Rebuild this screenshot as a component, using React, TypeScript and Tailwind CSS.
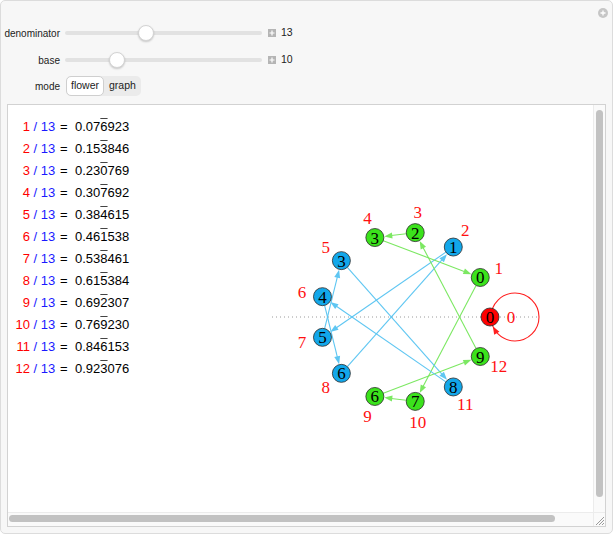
import React from "react";

const GREEN = new Set([1, 10, 9, 12, 3, 4]);
const CX = 405;
const CY = 317;
const R = 85;
const LR = 106;
const NR = 9;

const nodes = Array.from({ length: 13 }, (_, k) => {
  const t = (2 * Math.PI * k) / 13;
  return {
    k,
    x: CX + R * Math.cos(t),
    y: CY - R * Math.sin(t),
    lx: CX + LR * Math.cos(t),
    ly: CY - LR * Math.sin(t),
    d: Math.floor((10 * k) / 13),
  };
});

function fillFor(k: number) {
  if (k === 0) return "#ff0000";
  return GREEN.has(k) ? "#3be21c" : "#12a7ea";
}
function edgeFor(k: number) {
  return GREEN.has(k) ? "#7ce862" : "#5ec6f2";
}

function Edge({ a, b }: { a: number; b: number }) {
  const A = nodes[a];
  const B = nodes[b];
  const dx = B.x - A.x;
  const dy = B.y - A.y;
  const len = Math.hypot(dx, dy);
  const ux = dx / len;
  const uy = dy / len;
  const tipX = B.x - ux * (NR + 0.5);
  const tipY = B.y - uy * (NR + 0.5);
  const bx = tipX - ux * 8;
  const by = tipY - uy * 8;
  const nx = -uy;
  const ny = ux;
  const c = edgeFor(a);
  return (
    <g>
      <line x1={A.x + ux * NR} y1={A.y + uy * NR} x2={bx + ux * 1} y2={by + uy * 1} stroke={c} strokeWidth={1.1} />
      <polygon
        points={`${tipX},${tipY} ${bx + nx * 3},${by + ny * 3} ${bx - nx * 3},${by - ny * 3}`}
        fill={c}
      />
    </g>
  );
}

function Graph() {
  const tipX = 492.8;
  const tipY = 326.2;
  const ux = -0.5;
  const uy = -0.866;
  const bx = tipX - ux * 8;
  const by = tipY - uy * 8;
  const nx = -uy;
  const ny = ux;
  return (
    <svg width={300} height={250} className="mt-[85px] shrink-0" style={{ fontFamily: '"Liberation Serif", serif' }}>
      <g transform="translate(-260,-190)">
        <line x1={272} y1={317} x2={537} y2={317} stroke="#9a9a9a" strokeWidth={1} strokeDasharray="1 3" />
        <circle cx={515} cy={317} r={24} fill="none" stroke="#ff2020" strokeWidth={1.1} />
        <polygon
          points={`${tipX},${tipY} ${bx + nx * 3},${by + ny * 3} ${bx - nx * 3},${by - ny * 3}`}
          fill="#ff2020"
        />
        {nodes.slice(1).map((n) => (
          <Edge key={n.k} a={n.k} b={(10 * n.k) % 13} />
        ))}
        {nodes.map((n) => (
          <g key={n.k}>
            <circle cx={n.x} cy={n.y} r={NR} fill={fillFor(n.k)} stroke="#2a2a2a" strokeWidth={0.8} />
            <text x={n.x} y={n.y + 6} textAnchor="middle" fontSize={17} fill="#000">
              {n.d}
            </text>
            <text x={n.lx} y={n.ly + 6} textAnchor="middle" fontSize={17} fill="#ff1010">
              {n.k}
            </text>
          </g>
        ))}
      </g>
    </svg>
  );
}

const decimals = [
  "076923",
  "153846",
  "230769",
  "307692",
  "384615",
  "461538",
  "538461",
  "615384",
  "692307",
  "769230",
  "846153",
  "923076",
];

function Row({ n }: { n: number }) {
  const d = decimals[n - 1];
  return (
    <div className="flex h-[22px] items-center whitespace-pre text-[13px]">
      <span className="w-[22px] text-right text-[#ff0000]">{n}</span>
      <span className="text-[#1a1aff]"> / 13</span>
      <span className="ml-[1px] text-black"> =</span>
      <span className="ml-[7.5px] text-black">
        0.{d.slice(0, 2)}
        <span className="overline decoration-[#444]">{d[2]}</span>
        {d.slice(3)}
      </span>
    </div>
  );
}

function Slider({ label, value, pos }: { label: string; value: string; pos: number }) {
  return (
    <div className="flex items-center h-full">
      <div className="w-[59px] text-right text-[10px] text-[#222]">{label}</div>
      <div className="relative ml-[5px] w-[197px] h-[4px] rounded-full bg-[#e2e2e2]">
        <div
          className="absolute top-1/2 w-[16px] h-[16px] -translate-x-1/2 -translate-y-1/2 rounded-full bg-white border border-[#d4d4d4] shadow-[0_1px_2px_rgba(0,0,0,0.2)]"
          style={{ left: pos }}
        />
      </div>
      <div className="ml-[6px] w-[8px] h-[8px] bg-[#b5b5b5] flex items-center justify-center">
        <svg width={8} height={8} viewBox="0 0 8 8">
          <path d="M4 1.5v5M1.5 4h5" stroke="#fff" strokeWidth={1.2} />
        </svg>
      </div>
      <div className="ml-[5px] text-[10.5px] text-[#222]">{value}</div>
    </div>
  );
}

export default function App() {
  return (
    <div className="w-[614px] h-[535px] bg-white" style={{ fontFamily: '"Liberation Sans", Arial, sans-serif' }}>
      <div className="relative w-[613px] h-[534px] border border-[#dcdcdc] rounded-[5px] bg-[#f7f7f7] flex flex-col">
        <div className="absolute right-[4px] top-[7px] w-[10px] h-[10px] rounded-full bg-[#c6c6c6] flex items-center justify-center">
          <svg width={10} height={10} viewBox="0 0 10 10">
            <path d="M5 2.5v5M2.5 5h5" stroke="#fff" strokeWidth={1.3} />
          </svg>
        </div>
        <div className="pt-[19px] flex flex-col">
          <div className="h-[26px]">
            <Slider label="denominator" value="13" pos={81} />
          </div>
          <div className="h-[28px]">
            <Slider label="base" value="10" pos={52} />
          </div>
          <div className="h-[24px] flex items-center">
            <div className="w-[59px] text-right text-[10px] text-[#222]">mode</div>
            <div className="ml-[6px] flex h-[20px] rounded-[5px] bg-[#ebebeb] text-[10.5px] text-[#222]">
              <div className="px-[4px] flex items-center rounded-[5px] bg-white border border-[#cfcfcf]">flower</div>
              <div className="px-[5px] flex items-center">graph</div>
            </div>
          </div>
        </div>
        <div className="ml-[6px] mr-[6px] mt-[6px] h-[423px] border border-[#d2d2d2] bg-white flex flex-col">
          <div className="flex flex-1 min-h-0">
            <div className="flex-1 flex items-start">
              <div className="w-[252px] pt-[11px] flex flex-col shrink-0">
                {decimals.map((_, i) => (
                  <Row key={i} n={i + 1} />
                ))}
              </div>
              <Graph />
            </div>
            <div className="w-[12px] border-l border-[#ececec] bg-[#fafafa] pt-[5px] pl-[2px]">
              <div className="w-[7px] h-[387px] rounded-full bg-[#c2c2c2]" />
            </div>
          </div>
          <div className="h-[14px] flex border-t border-[#ececec] bg-[#fafafa]">
            <div className="flex-1 pl-[1px] pt-[2px]">
              <div className="w-[546px] h-[7px] rounded-full bg-[#c2c2c2]" />
            </div>
            <div className="w-[12px] border-l border-[#ececec] flex items-end justify-end">
              <svg width={11} height={11} viewBox="0 0 11 11">
                <path d="M10 2L2 10M10 5L5 10M10 8L8 10" stroke="#9a9a9a" strokeWidth={1} />
              </svg>
            </div>
          </div>
        </div>
      </div>
    </div>
  );
}
